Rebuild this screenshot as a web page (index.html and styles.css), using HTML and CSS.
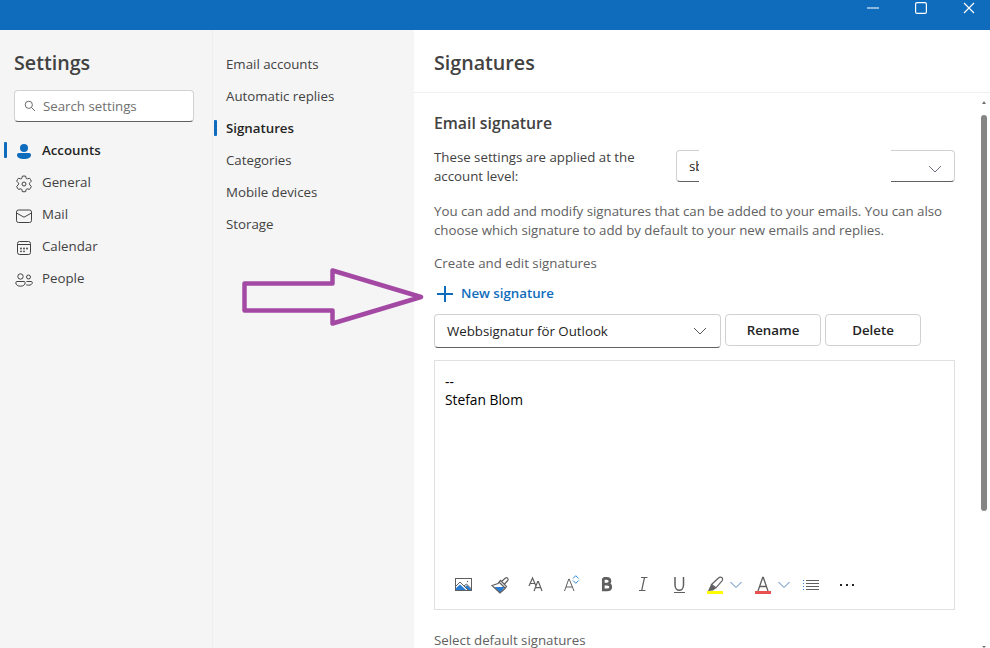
FILE: index.html
```html
<!DOCTYPE html>
<html lang="en">
<head>
  <meta charset="UTF-8" />
  <title>Settings - Signatures</title>
  <link rel="stylesheet" href="styles.css">
</head>
<body>
  <header class="titlebar">
    <svg width="140" height="30" viewBox="0 0 140 30" fill="none" stroke="#fff" stroke-width="1.2">
      <path d="M17 8h12" stroke-width="1.5" stroke="#b5d3ed" />
      <rect x="65.6" y="2.6" width="10.8" height="10.8" rx="1.5" />
      <path d="M114 3l10 10M124 3l-10 10" />
    </svg>
  </header>

  <div class="app">
    <aside class="sidebar">
      <h1 class="title">Settings</h1>
      <div class="search">
        <svg width="12" height="12" viewBox="0 0 12 12" fill="none" stroke="#6b6b6b"><circle cx="4.8" cy="4.8" r="3.6" /><path d="M7.5 7.5l3.5 3.5" /></svg>
        <span>Search settings</span>
      </div>
      <nav class="nav">
        <a class="nav-item active">
          <svg width="20" height="20" viewBox="0 0 20 20" fill="#0f6cbd"><circle cx="10" cy="6" r="4" /><path d="M5 11h10c1.2 0 2 .8 2 1.900C17 15.500 14 17 10 17s-7-1.500-7-4.100C3 11.800 3.800 11 5 11z" /></svg>
          <span>Accounts</span>
        </a>
        <a class="nav-item">
          <svg width="20" height="20" viewBox="0 0 20 20" fill="none" stroke="#424242" stroke-linejoin="round"><path d="M8.300 2.200Q10 1.800 11.700 2.200L12.100 4.200Q12.400 5.100 13.400 4.900L15.500 4.200Q16.800 5.600 17.300 7.200L15.800 8.700Q14.900 9.600 15.800 10.900L17.300 12.400Q16.700 14.200 15.500 15.400L13.500 14.900Q12.300 14.600 12.100 15.700L11.700 17.600Q10 18 8.300 17.600L7.900 15.700Q7.600 14.600 6.500 14.900L4.500 15.400Q3.200 14.100 2.700 12.400L4.200 10.900Q5.100 9.800 4.200 8.700L2.700 7.200Q3.200 5.600 4.500 4.200L6.600 4.900Q7.600 5.100 7.900 4.200Z" /><circle cx="10" cy="10" r="2" /></svg>
          <span>General</span>
        </a>
        <a class="nav-item">
          <svg width="20" height="20" viewBox="0 0 20 20" fill="none" stroke="#424242"><rect x="2.500" y="4" width="15" height="12.500" rx="2" /><path d="M2.500 7L10 11.200l7.500-4.200" /></svg>
          <span>Mail</span>
        </a>
        <a class="nav-item">
          <svg width="20" height="20" viewBox="0 0 20 20" fill="none" stroke="#424242"><rect x="3.500" y="3.500" width="13" height="13" rx="2" /><path d="M3.500 6.500h13" /><g fill="#424242" stroke="none"><circle cx="7" cy="10.500" r=".9" /><circle cx="10" cy="10.500" r=".9" /><circle cx="13" cy="10.500" r=".9" /><circle cx="7" cy="13.300" r=".9" /><circle cx="10" cy="13.300" r=".9" /></g></svg>
          <span>Calendar</span>
        </a>
        <a class="nav-item">
          <svg width="20" height="20" viewBox="0 0 20 20" fill="none" stroke="#424242"><circle cx="6.500" cy="6.500" r="2.700" /><circle cx="14.500" cy="7" r="2" /><path d="M3 11.500h7c.7 0 1.200.5 1.200 1.200 0 2.200-2 3.500-4.700 3.500s-4.700-1.300-4.700-3.500c0-.7.500-1.200 1.200-1.200zM12.500 11.500h4.800c.6 0 1 .4 1 1 0 1.800-1.600 2.700-3.800 2.700-1 0-1.600-.2-2.300-.4" /></svg>
          <span>People</span>
        </a>
      </nav>
    </aside>

    <nav class="subnav">
      <a class="subnav-item">Email accounts</a>
      <a class="subnav-item">Automatic replies</a>
      <a class="subnav-item active">Signatures</a>
      <a class="subnav-item">Categories</a>
      <a class="subnav-item">Mobile devices</a>
      <a class="subnav-item">Storage</a>
    </nav>

    <main class="main">
      <div class="main-header"><h2 class="title">Signatures</h2></div>
      <div class="main-body">
        <div class="content">
          <h3>Email signature</h3>
          <div class="account">
            <p>These settings are applied at the account level:</p>
            <div class="select account-select">
              <span>sb</span>
              <svg width="14" height="8" viewBox="0 0 14 8" fill="none" stroke="#6b7080"><path d="M1 1l6 6 6-6" /></svg>
              <div class="mask"></div>
            </div>
          </div>
          <p class="muted info">You can add and modify signatures that can be added to your emails. You can also<br>choose which signature to add by default to your new emails and replies.</p>
          <p class="muted create">Create and edit signatures</p>
          <a class="new-signature">
            <svg width="16" height="16" viewBox="0 0 16 16" stroke="#0f6cbd" stroke-width="2"><path d="M8 0v16M0 8h16" /></svg>
            <span>New signature</span>
          </a>
          <div class="signature-row">
            <div class="select signature-select">
              <span>Webbsignatur för Outlook</span>
              <svg width="14" height="8" viewBox="0 0 14 8" fill="none" stroke="#555"><path d="M1 1l6 6 6-6" /></svg>
            </div>
            <button class="btn">Rename</button>
            <button class="btn">Delete</button>
          </div>
          <div class="editor">
            <div class="editor-text">--<br>Stefan Blom</div>
            <!-- formatting toolbar -->
            <svg class="toolbar" width="420" height="30" viewBox="450 570 420 30" fill="none" stroke="#5f5f5f">
              <g>
                <rect x="455.500" y="578.500" width="16" height="12" />
                <path d="M456 588l4-3.500 6 5.500h-10zM465 587l2-2 4 4v1h-3z" fill="#2b7cd3" stroke="none" />
                <path d="M456 586l4-4 8 8M464 586l2.500-2 5 5" />
                <circle cx="467.500" cy="581.500" r=".7" fill="#5f5f5f" stroke="none" />
              </g>
              <g stroke-width="1.200">
                <path d="M494.500 587l10.500 0-5 6z" fill="#2b7cd3" stroke="none" />
                <path d="M492 585.500l6-2 2.500-3 6 6-2 2.500-4.500 4zM499 582l6 6M501.500 581.500l4-3.500c1.500-1 3.500 1 2.300 2.500L504.500 584" />
              </g>
              <g stroke-width="1.200">
                <path d="M529 586l3.500-8 3.500 8M530.300 583.500h4.400M534 591l3.700-9.500h.7L542 591M535.300 587.700h5.300" />
              </g>
              <g>
                <path d="M564.500 591l4.300-12h.4L574 591M566 587h6.500" />
                <path d="M573 578.500l2.800-2.800 2.800 2.800M573 580.500l2.800 2.800 2.800-2.800" stroke="#2b88d8" />
              </g>
              <path d="M603.300 578.300V589.800H607c5 0 5-5.700 0-5.700h-3.700M607 584c4 0 4-5.700-.3-5.700h-3.400" stroke-width="2.700" />
              <path d="M641 577.500h6.500M639 590.500h6.500M644.500 577.500l-2.800 13" stroke-width="1.200" />
              <path d="M675 577v8c0 7 8.500 7 8.500 0v-8" stroke-width="1.500" /><path d="M674 592.500h11" />
              <g>
                <path d="M711.500 584.500l7-6.500c2-2 5.500 0 3.500 2.800l-6 7z" stroke-width="1.200" />
                <path d="M708 591l3-6.500 5 3.800-3 2.200z" fill="#5f5f5f" stroke="none" />
                <path d="M707 592.500h16" stroke="#ff0" stroke-width="3" />
                <path d="M730.500 582l5.500 5.500 5.500-5.500" stroke="#4b83bd" />
              </g>
              <g>
                <path d="M758 591l4.700-13.500h.6L768 591M759.800 586.500h6.500" stroke-width="1.300" />
                <path d="M755 592.500h16" stroke="#e9514f" stroke-width="3" />
                <path d="M778.500 582l5.500 5.500 5.500-5.500" stroke="#4b83bd" />
              </g>
              <path d="M806 580.500h13M806 583.500h13M806 586.500h13M806 589.500h13" />
              <path d="M803 580.500h1M803 583.500h1M803 586.500h1M803 589.500h1" stroke="#2b7cd3" />
              <path d="M840 585h2M846 585h2M852 585h2" stroke="#242424" stroke-width="2" />
            </svg>
          </div>
          <p class="muted defaults">Select default signatures</p>
        </div>
        <div class="scrollbar">
          <span class="arrow-up"></span>
          <span class="thumb"></span>
          <span class="arrow-down"></span>
        </div>
      </div>
    </main>
  </div>

  <svg class="pointer" width="184" height="62" viewBox="240 266 184 62" fill="none" stroke="#a349a4" stroke-width="4.500" stroke-linejoin="round"><path d="M244.500 283.500H332.500V270.500L421 297L332.500 323.500V310.500H244.500Z" /></svg>
</body>
</html>
```

FILE: styles.css
```css
* {
  box-sizing: border-box;
}
body {
  margin: 0;
  height: 648px;
  overflow: hidden;
  position: relative;
  font-family: "Open Sans", "Noto Sans", sans-serif;
  font-size: 13.3px;
  line-height: 19px;
  letter-spacing: -0.015px;
  color: #424242;
  background: #fff;
}
h1, h2, h3, p {
  margin: 0;
}
svg {
  display: block;
  flex-shrink: 0;
}
.titlebar {
  height: 30px;
  background: #0f6cbd;
  display: flex;
  justify-content: flex-end;
}
.app {
  display: flex;
  height: 618px;
}
.sidebar {
  width: 213px;
  background: #f5f5f5;
  border-right: 1px solid #efefef;
}
.title {
  font-size: 19.7px;
  font-weight: 600;
  line-height: 28px;
}
.sidebar .title {
  padding: 19px 0 0 14px;
}
.search {
  width: 180px;
  height: 32px;
  margin: 13px 0 12px 14px;
  padding-left: 9px;
  display: flex;
  align-items: center;
  gap: 7px;
  background: #fff;
  border: 1px solid #d1d1d1;
  border-bottom-color: #616161;
  border-radius: 4px;
  color: #707070;
}
.nav-item {
  height: 32px;
  padding-left: 14px;
  display: flex;
  align-items: center;
  gap: 8px;
}
.nav-item svg {
  margin-top: 4px;
}
.active {
  font-weight: 600;
  color: #242424;
  position: relative;
}
.active::before {
  content: "";
  position: absolute;
  left: 4px;
  top: 8px;
  width: 3px;
  height: 16px;
  border-radius: 1px;
  background: #0f6cbd;
}
.subnav {
  width: 201px;
  padding-top: 18px;
  background: #f5f5f5;
}
.subnav-item {
  display: block;
  height: 32px;
  padding-left: 13px;
  line-height: 32px;
}
.subnav-item.active::before {
  left: 1px;
}
.main {
  flex: 1;
  display: flex;
  flex-direction: column;
}
.main-header {
  flex-shrink: 0;
  height: 63px;
  padding: 19px 0 0 20px;
  border-bottom: 1px solid #f0f0f0;
}
.main-body {
  flex: 1;
  display: flex;
  justify-content: space-between;
}
.content {
  width: 541px;
  padding: 20px 0 0 20px;
}
h3 {
  font-size: 15.8px;
  font-weight: 600;
  line-height: 20px;
}
.account {
  display: flex;
  justify-content: space-between;
  margin-top: 15px;
}
.account p {
  width: 215px;
}
.select {
  display: flex;
  align-items: center;
  justify-content: space-between;
  padding: 0 13px 0 12px;
  border: 1px solid #d1d1d1;
  border-bottom-color: #616161;
  border-radius: 4px;
  color: #242424;
}
.account-select {
  width: 279px;
  height: 32px;
  margin-top: 2px;
  padding-right: 12px;
  position: relative;
}
.account-select svg {
  margin-top: 5px;
}
.mask {
  position: absolute;
  left: 22px;
  top: -1px;
  width: 192px;
  height: 32px;
  background: #fff;
}
.muted {
  color: #616161;
}
.info {
  margin-top: 16px;
  white-space: nowrap;
}
.create {
  margin-top: 14px;
}
.new-signature {
  display: flex;
  align-items: center;
  gap: 8px;
  margin-top: 11px;
  padding-left: 3px;
  font-weight: 600;
  color: #0f6cbd;
}
.signature-row {
  display: flex;
  gap: 4px;
  margin-top: 11px;
}
.signature-select {
  width: 287px;
  height: 34px;
}
.btn {
  width: 96px;
  height: 32px;
  padding: 0;
  font: inherit;
  font-weight: 600;
  color: #242424;
  background: #fff;
  border: 1px solid #d1d1d1;
  border-radius: 4px;
}
.editor {
  height: 250px;
  margin-top: 12px;
  padding: 12px 10px 9px;
  display: flex;
  flex-direction: column;
  justify-content: space-between;
  border: 1px solid #e0e0e0;
  color: #000;
}
.editor-text {
  font-size: 13.8px;
  line-height: 18px;
}
.toolbar {
  margin-left: 5px;
}
.defaults {
  margin-top: 21px;
}
.scrollbar {
  width: 12px;
  height: 555px;
  display: flex;
  flex-direction: column;
  align-items: center;
}
.arrow-up {
  margin-top: 8px;
  border: 2px solid transparent;
  border-top: 0;
  border-bottom: 3px solid #707070;
}
.thumb {
  width: 6px;
  height: 396px;
  margin-top: 11px;
  border-radius: 3px;
  background: #858585;
}
.arrow-down {
  margin-top: auto;
  border: 2px solid transparent;
  border-bottom: 0;
  border-top: 2px solid #707070;
}
/* arrow pointing at "New signature" */
.pointer {
  position: absolute;
  left: 240px;
  top: 266px;
}
```
